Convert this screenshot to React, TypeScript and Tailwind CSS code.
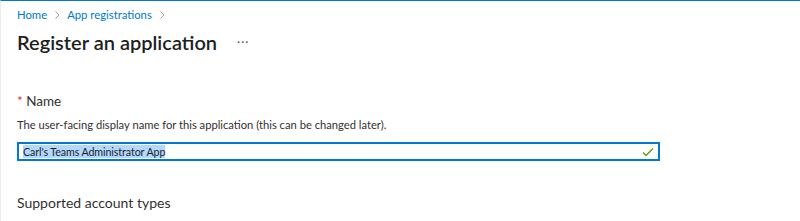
export default function App() {
  return (
    <div className="w-[800px] h-[221px] bg-white border-t border-[#0078d4] border-l border-l-[#ececec] overflow-hidden font-['Lato',sans-serif] text-[#323130]">
      <div className="pl-[16px] pt-[6px]">
        {/* Breadcrumb */}
        <div className="flex items-center gap-[6px] text-[11.3px] leading-[16px] text-[#0078d4]">
          <span>Home</span>
          <svg width="8" height="10" viewBox="0 0 8 10">
            <path d="M2.5 1.5 L6 5 L2.5 8.5" fill="none" stroke="#a19f9d" strokeWidth="1" />
          </svg>
          <span>App registrations</span>
          <svg width="8" height="10" viewBox="0 0 8 10">
            <path d="M2.5 1.5 L6 5 L2.5 8.5" fill="none" stroke="#a19f9d" strokeWidth="1" />
          </svg>
        </div>

        {/* Title */}
        <div className="flex items-center mt-[5px]">
          <h1 className="text-[20px] leading-[28px] font-semibold text-[#201f1e]">Register an application</h1>
          <span className="ml-[20px] text-[12px] text-[#605e5c] tracking-[1px]">···</span>
        </div>

        {/* Name */}
        <div className="mt-[35px] text-[13.5px] leading-[20px]">
          <span className="text-[#d13438]">*</span> Name
        </div>
        <p className="mt-[6px] text-[11.2px] leading-[16px]">
          The user-facing display name for this application (this can be changed later).
        </p>
        <div className="mt-[9px] w-[643px] h-[19px] border-2 border-[#0078d4] flex items-center px-[4px]">
          <span className="text-[10.7px] leading-[13px] bg-[#b3d7fe] text-[#201f1e] tracking-[-0.1px]">Carl's Teams Administrator App</span>
          <svg className="ml-auto" width="12" height="10" viewBox="0 0 12 10">
            <path d="M1 5.5 L4 8.5 L11 1.5" fill="none" stroke="#57a300" strokeWidth="1.3" />
          </svg>
        </div>

        <div className="mt-[32px] text-[14px] leading-[20px]">Supported account types</div>
      </div>
    </div>
  );
}
